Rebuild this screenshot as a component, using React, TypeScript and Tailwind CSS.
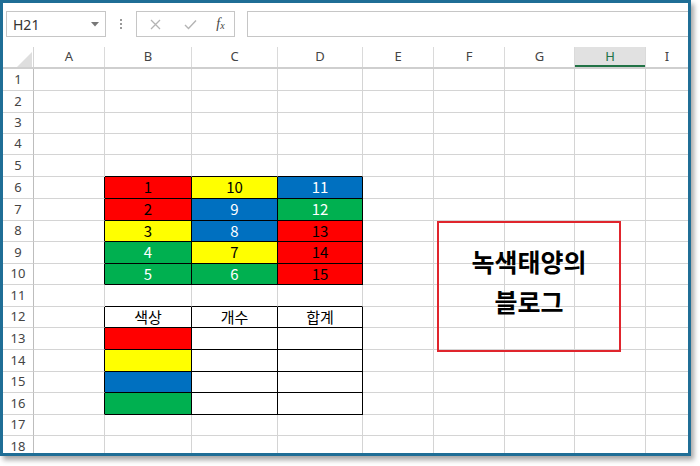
import React from 'react'

const COLS = [
  { l: 'A', w: 'w-[71px]' },
  { l: 'B', w: 'w-[87px]' },
  { l: 'C', w: 'w-[86px]' },
  { l: 'D', w: 'w-[85px]' },
  { l: 'E', w: 'w-[71px]' },
  { l: 'F', w: 'w-[71px]' },
  { l: 'G', w: 'w-[70px]' },
  { l: 'H', w: 'w-[71px]' },
  { l: 'I', w: 'flex-1' },
]

// row heights incl. bottom gridline
const ROW_H = [
  'h-[22px]', 'h-[22px]', 'h-[21px]', 'h-[21px]', 'h-[22px]', 'h-[22px]',
  'h-[22px]', 'h-[21px]', 'h-[22px]', 'h-[21px]', 'h-[22px]', 'h-[21px]',
  'h-[22px]', 'h-[22px]', 'h-[21px]', 'h-[22px]', 'h-[21px]', 'h-[22px]',
]

const FILL: Record<string, string> = {
  R: 'bg-[#ff0000] text-black',
  Y: 'bg-[#ffff00] text-black',
  B: 'bg-[#0070c0] text-white',
  G: 'bg-[#00b050] text-white',
  W: 'bg-white text-black',
}

// cells keyed by "row:col" (col 0 = A)
const CELLS: Record<string, [string, string]> = {
  '6:1': ['R', '1'], '6:2': ['Y', '10'], '6:3': ['B', '11'],
  '7:1': ['R', '2'], '7:2': ['B', '9'], '7:3': ['G', '12'],
  '8:1': ['Y', '3'], '8:2': ['B', '8'], '8:3': ['R', '13'],
  '9:1': ['G', '4'], '9:2': ['Y', '7'], '9:3': ['R', '14'],
  '10:1': ['G', '5'], '10:2': ['G', '6'], '10:3': ['R', '15'],
  '12:1': ['W', '색상'], '12:2': ['W', '개수'], '12:3': ['W', '합계'],
  '13:1': ['R', ''], '13:2': ['W', ''], '13:3': ['W', ''],
  '14:1': ['Y', ''], '14:2': ['W', ''], '14:3': ['W', ''],
  '15:1': ['B', ''], '15:2': ['W', ''], '15:3': ['W', ''],
  '16:1': ['G', ''], '16:2': ['W', ''], '16:3': ['W', ''],
}

const inTable = (r: number, c: number) => !!CELLS[`${r}:${c}`]

function FormulaBar() {
  return (
    <div className="h-[44px] pt-[8px] flex items-start shrink-0">
      <div className="ml-[3px] w-[100px] h-[26px] border border-[#c6c6c6] flex items-center justify-between pl-[6px] pr-[6px] text-[14px] text-[#333] font-['Noto_Sans',sans-serif]">
        <span>H21</span>
        <svg width="8" height="5" viewBox="0 0 8 5">
          <path d="M0 0 L8 0 L4 4.5 Z" fill="#777" />
        </svg>
      </div>
      <div className="w-[30px] h-[26px] flex flex-col items-center justify-center gap-[2px]">
        <span className="w-[2px] h-[2px] bg-[#999]" />
        <span className="w-[2px] h-[2px] bg-[#999]" />
        <span className="w-[2px] h-[2px] bg-[#999]" />
      </div>
      <div className="w-[99px] h-[26px] border border-[#c6c6c6] flex items-center">
        <div className="w-[36px] flex justify-center">
          <svg width="11" height="11" viewBox="0 0 11 11">
            <path d="M1 1 L10 10 M10 1 L1 10" stroke="#b4b4b4" strokeWidth="1.3" />
          </svg>
        </div>
        <div className="w-[34px] flex justify-center">
          <svg width="13" height="11" viewBox="0 0 13 11">
            <path d="M1 6 L4.5 9.5 L12 1.5" stroke="#b4b4b4" strokeWidth="1.4" fill="none" />
          </svg>
        </div>
        <div className="flex-1 flex justify-center text-[#444] italic font-['Liberation_Serif',serif] text-[14px] leading-none">
          <span>f</span>
          <span className="text-[10px] self-end">x</span>
        </div>
      </div>
      <div className="ml-[12px] flex-1 h-[26px] border border-r-0 border-[#c6c6c6]" />
    </div>
  )
}

function HeaderRow() {
  return (
    <div className="flex h-[22px] border-b-2 border-[#cfcfcf] shrink-0 font-['Noto_Sans',sans-serif] text-[13px] text-[#444]">
      <div className="w-[31px] border-r border-[#d4d4d4] flex items-end justify-end pr-[1px]">
        <svg width="15" height="15" viewBox="0 0 15 15">
          <path d="M15 0 L15 15 L0 15 Z" fill="#dedede" />
        </svg>
      </div>
      {COLS.map((c) => (
        <div
          key={c.l}
          className={`${c.w} flex items-center justify-center ${
            c.l === 'H'
              ? 'bg-[#e1e1e1] text-[#217346] shadow-[inset_0_-2px_0_#217346]'
              : ''
          } ${c.l === 'I' ? '' : 'border-r border-[#dadada]'}`}
        >
          {c.l}
        </div>
      ))}
    </div>
  )
}

export default function App() {
  return (
    <div className="relative w-[700px] h-[466px] bg-white overflow-hidden">
      <div className="w-[691px] h-[456px] border-[3px] border-[#1f6e96] bg-white flex flex-col overflow-hidden shadow-[3px_4px_5px_rgba(0,0,0,0.35)]">
        <FormulaBar />
        <HeaderRow />

        {/* Grid */}
        <div className="flex flex-col">
          {ROW_H.map((h, i) => {
            const r = i + 1
            return (
              <div key={r} className={`flex ${h} shrink-0`}>
                <div className="w-[31px] border-r border-b border-r-[#bdbdbd] border-b-[#d4d4d4] flex items-center justify-center text-[13px] text-[#444] font-['Noto_Sans',sans-serif]">
                  {r}
                </div>
                {COLS.map((c, ci) => {
                  const cell = CELLS[`${r}:${ci}`]
                  const rBlack = inTable(r, ci) || inTable(r, ci + 1)
                  const bBlack = inTable(r, ci) || inTable(r + 1, ci)
                  return (
                    <div
                      key={c.l}
                      className={`${c.w} border-b ${bBlack ? 'border-b-black' : 'border-b-[#d4d4d4]'} ${
                        c.l === 'I' ? '' : `border-r ${rBlack ? 'border-r-black' : 'border-r-[#d4d4d4]'}`
                      } ${cell ? FILL[cell[0]] : ''} flex items-center justify-center text-[15px] font-['Noto_Sans_CJK_KR',sans-serif]`}
                    >
                      {cell ? cell[1] : ''}
                    </div>
                  )
                })}
              </div>
            )
          })}
        </div>
      </div>

      {/* Text box floating over the sheet */}
      <div className="absolute left-[437px] top-[221px] w-[184px] h-[131px] border-2 border-[#e0252d] flex flex-col items-center pt-[18px] text-[25px] leading-[40px] font-bold text-black font-['Noto_Sans_CJK_KR',sans-serif]">
        <span>녹색태양의</span>
        <span>블로그</span>
      </div>
    </div>
  )
}
